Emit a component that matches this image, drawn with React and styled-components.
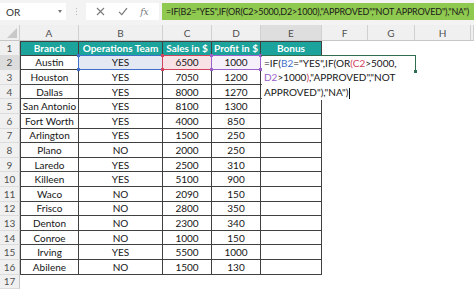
import React from 'react';
import styled, { createGlobalStyle } from 'styled-components';

const GlobalStyle = createGlobalStyle`
  html, body { margin: 0; padding: 0; background: #fff; }
  body { font-family: Lato, "Liberation Sans", sans-serif; }
  #root { width: 474px; height: 289px; }
`;

const Page = styled.div`
  width: 474px;
  height: 289px;
  overflow: hidden;
  background: #fff;
`;

const TopBar = styled.div`
  height: 25px;
  box-sizing: border-box;
  padding-top: 3px;
  background: #f3f3f3;
  display: flex;
  align-items: flex-start;
`;

const NameBox = styled.div`
  width: 66px;
  height: 17px;
  box-sizing: border-box;
  background: #fff;
  display: flex;
  align-items: center;
  justify-content: space-between;
  padding: 0 4px 0 6px;
  font-size: 10px;
  color: #333;
`;

const Caret = styled.span`
  width: 0;
  height: 0;
  border-left: 2.5px solid transparent;
  border-right: 2.5px solid transparent;
  border-top: 3px solid #777;
`;

const Divider = styled.div`
  width: 20px;
  height: 17px;
  display: flex;
  flex-direction: column;
  align-items: center;
  justify-content: center;
  gap: 2px;
  & > i {
    width: 1px;
    height: 1px;
    background: #b8b8b8;
  }
`;

const FuncBox = styled.div`
  width: 73px;
  height: 17px;
  background: #fff;
  display: flex;
  align-items: center;
  justify-content: space-around;
  padding: 0 4px;
  box-sizing: border-box;
  color: #777;
`;

const Fx = styled.span`
  font-family: "DejaVu Serif", serif;
  font-style: italic;
  font-size: 9px;
  color: #777;
`;

const FormulaBar = styled.div`
  flex: 1;
  margin-left: 3px;
  height: 17px;
  background: #8fc94f;
  display: flex;
  align-items: center;
  padding-left: 4px;
  font-size: 9px;
  letter-spacing: -0.18px;
  color: #1a1a1a;
  white-space: nowrap;
  overflow: hidden;
`;

const Sheet = styled.div`
  position: relative;
  display: grid;
  grid-template-columns: 20px 59px 84px 49px 49px 61px 46px 47px 56px 1fr;
  grid-template-rows: 16px repeat(17, 14.6px);
`;

const Corner = styled.div`
  background: #f0f0f0;
  border-right: 1px solid #d0d0d0;
  border-bottom: 1px solid #c6c6c6;
  box-sizing: border-box;
  display: flex;
  align-items: flex-end;
  justify-content: flex-end;
  padding: 0 2px 2px 0;
  & > span {
    width: 0;
    height: 0;
    border-left: 10px solid transparent;
    border-bottom: 10px solid #c8c8c8;
  }
`;

const ColHeader = styled.div`
  background: ${(p) => (p.$active ? '#dedede' : '#f0f0f0')};
  border-right: 1px solid #d0d0d0;
  border-bottom: 1px solid #c6c6c6;
  box-sizing: border-box;
  display: flex;
  align-items: center;
  justify-content: center;
  font-size: 10px;
  color: #505050;
`;

const RowHeader = styled.div`
  background: ${(p) => (p.$active ? '#dcdcdc' : '#f0f0f0')};
  border-right: 1px solid #c6c6c6;
  border-bottom: 1px solid #dcdcdc;
  box-sizing: border-box;
  display: flex;
  align-items: center;
  justify-content: center;
  font-size: 10px;
  color: #505050;
`;

const Cell = styled.div`
  position: relative;
  box-sizing: border-box;
  border-right: 1px solid #404040;
  border-bottom: 1px solid #404040;
  border-left: ${(p) => (p.$first ? '1px solid #404040' : 'none')};
  border-top: ${(p) => (p.$top ? '1px solid #404040' : 'none')};
  background: ${(p) => (p.$head ? '#1ba39c' : p.$fill || '#fff')};
  color: ${(p) => (p.$head ? '#fff' : '#161616')};
  font-weight: ${(p) => (p.$head ? 700 : 400)};
  font-size: 10px;
  display: flex;
  align-items: center;
  justify-content: center;
  white-space: nowrap;
`;

const Blank = styled.div`
  background: #fff;
`;

const RefMark = styled.div`
  position: absolute;
  left: -1px;
  top: -1px;
  right: -1px;
  bottom: -1px;
  border: 1px solid ${(p) => p.$c};
  z-index: 2;
  pointer-events: none;
`;

const Handle = styled.i`
  position: absolute;
  width: 3px;
  height: 3px;
  background: ${(p) => p.$c};
  left: ${(p) => (p.$r ? 'auto' : '-2px')};
  right: ${(p) => (p.$r ? '-2px' : 'auto')};
  top: ${(p) => (p.$b ? 'auto' : '-2px')};
  bottom: ${(p) => (p.$b ? '-2px' : 'auto')};
`;

const Editor = styled.div`
  position: absolute;
  left: 262px;
  top: 30.6px;
  width: 154px;
  height: 44px;
  background: #fff;
  z-index: 3;
  font-size: 10px;
  color: #161616;
`;

const EditFrame = styled.div`
  position: absolute;
  left: -1px;
  top: -1px;
  right: 0;
  height: 15px;
  border-top: 1px solid #2f6f4f;
  border-right: 1px solid #2f6f4f;
  & > i {
    position: absolute;
    right: -2px;
    bottom: -2px;
    width: 3px;
    height: 3px;
    background: #2f6f4f;
  }
`;

const EditLine = styled.div`
  height: 14.6px;
  line-height: 14.6px;
  padding-left: 2px;
  white-space: nowrap;
`;

const Ref = styled.span`
  color: ${(p) => p.$c};
`;

const TextCaret = styled.span`
  display: inline-block;
  width: 1px;
  height: 11px;
  background: #111;
  vertical-align: middle;
  margin-left: 1px;
`;

const BLUE = '#3f6fc9';
const RED = '#d2435f';
const PURPLE = '#9a62c8';

const data = [
  ['Austin', 'YES', '6500', '1000'],
  ['Houston', 'YES', '7050', '1200'],
  ['Dallas', 'YES', '8000', '1270'],
  ['San Antonio', 'YES', '8100', '1300'],
  ['Fort Worth', 'YES', '4000', '850'],
  ['Arlington', 'YES', '1500', '250'],
  ['Plano', 'NO', '2000', '250'],
  ['Laredo', 'YES', '2500', '310'],
  ['Killeen', 'YES', '5100', '900'],
  ['Waco', 'NO', '2090', '150'],
  ['Frisco', 'NO', '2800', '350'],
  ['Denton', 'NO', '2300', '340'],
  ['Conroe', 'NO', '1000', '150'],
  ['Irving', 'YES', '5500', '1000'],
  ['Abilene', 'NO', '1500', '130'],
];

const letters = ['A', 'B', 'C', 'D', 'E', 'F', 'G', 'H', 'I'];
const heads = ['Branch', 'Operations Team', 'Sales in $', 'Profit in $', 'Bonus'];

const refs = {
  1: { c: BLUE, fill: '#e3e8f2' },
  2: { c: RED, fill: '#f8e2e6' },
  3: { c: PURPLE, fill: '#f6f0fa' },
};

function Mark({ c }) {
  return (
    <RefMark $c={c}>
      <Handle $c={c} />
      <Handle $c={c} $r />
      <Handle $c={c} $b />
      <Handle $c={c} $r $b />
    </RefMark>
  );
}

const XIcon = () => (
  <svg width="9" height="9" viewBox="0 0 9 9">
    <path d="M1 1 L8 8 M8 1 L1 8" stroke="#7a7a7a" strokeWidth="1.1" fill="none" />
  </svg>
);

const CheckIcon = () => (
  <svg width="10" height="9" viewBox="0 0 10 9">
    <path d="M1 4.8 L3.8 7.6 L9 1.2" stroke="#7a7a7a" strokeWidth="1.2" fill="none" />
  </svg>
);

export default function App() {
  const rows = [];
  rows.push(
    <React.Fragment key="r1">
      <RowHeader>1</RowHeader>
      {heads.map((h, i) => (
        <Cell key={h} $head $top $first={i === 0}>
          {h}
        </Cell>
      ))}
      <Blank />
      <Blank />
      <Blank />
      <Blank />
    </React.Fragment>
  );
  data.forEach((r, idx) => {
    const rowNo = idx + 2;
    const cells = [...r, ''];
    rows.push(
      <React.Fragment key={'r' + rowNo}>
        <RowHeader $active={rowNo === 2}>{rowNo}</RowHeader>
        {cells.map((v, i) => {
          const ref = rowNo === 2 ? refs[i] : null;
          return (
            <Cell key={i} $first={i === 0} $fill={ref ? ref.fill : undefined}>
              {v}
              {ref && <Mark c={ref.c} />}
            </Cell>
          );
        })}
        <Blank />
        <Blank />
        <Blank />
        <Blank />
      </React.Fragment>
    );
  });
  rows.push(
    <React.Fragment key="r17">
      <RowHeader>17</RowHeader>
      {Array.from({ length: 9 }).map((_, i) => (
        <Blank key={i} />
      ))}
    </React.Fragment>
  );

  return (
    <Page>
      <GlobalStyle />
      <TopBar>
        <NameBox>
          <span>OR</span>
          <Caret />
        </NameBox>
        <Divider>
          <i />
          <i />
          <i />
        </Divider>
        <FuncBox>
          <XIcon />
          <CheckIcon />
          <Fx>fx</Fx>
        </FuncBox>
        <FormulaBar>
          =IF(B2="YES",IF(OR(C2&gt;5000,D2&gt;1000),"APPROVED","NOT APPROVED"),"NA")
        </FormulaBar>
      </TopBar>
      <Sheet>
        <Corner>
          <span />
        </Corner>
        {letters.map((l) => (
          <ColHeader key={l} $active={l === 'E'}>
            {l === 'I' ? '' : l}
          </ColHeader>
        ))}
        {rows}
        <Editor>
          <EditFrame>
            <i />
          </EditFrame>
          <EditLine>
            =IF(<Ref $c={BLUE}>B2</Ref>="YES",IF(OR<Ref $c={RED}>(C2</Ref>&gt;5000,
          </EditLine>
          <EditLine>
            <Ref $c={PURPLE}>D2</Ref>&gt;1000<Ref $c={RED}>)</Ref>,"APPROVED","NOT
          </EditLine>
          <EditLine>
            APPROVED"),"NA")
            <TextCaret />
          </EditLine>
        </Editor>
      </Sheet>
    </Page>
  );
}
